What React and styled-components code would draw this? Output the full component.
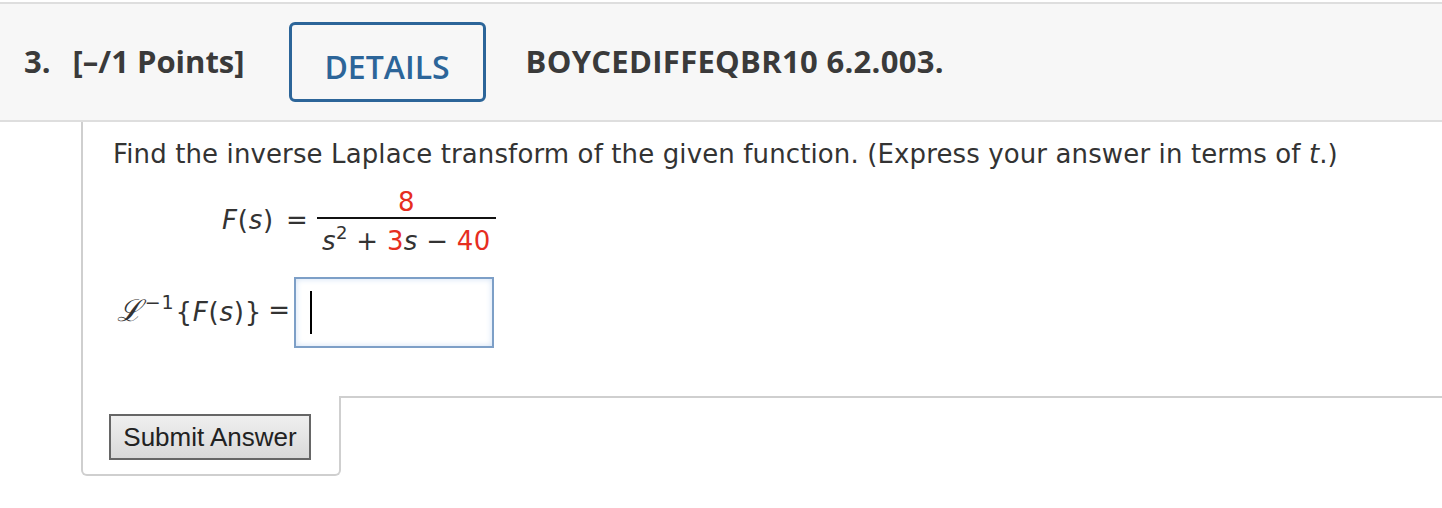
import React from 'react'
import styled, { createGlobalStyle } from 'styled-components'

const Global = createGlobalStyle`
    body {
        margin: 0;
        background: #fff;
        font-family: "DejaVu Sans", Verdana, sans-serif;
        color: #333;
    }
`

const Header = styled.div`
    box-sizing: border-box;
    margin-top: 2px;
    height: 120px;
    display: flex;
    align-items: center;
    background: #f7f7f7;
    border-top: 2px solid #dedede;
    border-bottom: 2px solid #dedede;
    padding: 0 0 3px 24px;
    font-family: "Open Sans", sans-serif;
    font-weight: 700;
    color: #3a3a3a;
`
const Num = styled.span`
    font-size: 31px;
    margin-right: 22px;
`
const Points = styled.span`
    font-size: 31px;
    margin-right: 44px;
`
const DetailsBtn = styled.div`
    box-sizing: border-box;
    width: 197px;
    height: 80px;
    margin-top: 3px;
    border: 3px solid #2c6599;
    border-radius: 6px;
    display: flex;
    align-items: center;
    justify-content: center;
    font-size: 32px;
    font-weight: 600;
    color: #2c6599;
    padding-top: 8px;
    margin-right: 40px;
`
const Code = styled.span`
    font-size: 31px;
    letter-spacing: 0.3px;
`

const Card = styled.div`
    margin-left: 81px;
`
const Content = styled.div`
    box-sizing: border-box;
    height: 274px;
    border-left: 2px solid #cfcfcf;
    padding: 15px 0 0 30px;
    font-size: 26px;
`
const Prompt = styled.p`
    margin: 0;
    line-height: 34px;
    letter-spacing: 0.12px;
`
const Var = styled.i`
    font-style: oblique;
`
const Red = styled.span`
    color: #e62e1f;
`
const MathRow = styled.div`
    display: flex;
    align-items: center;
    padding-left: ${props => props.indent}px;
    margin-top: ${props => props.top}px;
`
const Lhs = styled.span`
    padding-bottom: 6px;
    white-space: nowrap;
    letter-spacing: 0.8px;
`
const Eq = styled.span`
    padding-bottom: 6px;
    margin: 0 ${props => props.right}px 0 ${props => props.left}px;
`
const Fraction = styled.div`
    display: inline-flex;
    flex-direction: column;
    align-items: center;
    width: 179px;
`
const Numer = styled.div`
    line-height: 26px;
    padding-bottom: 2px;
    border-bottom: 2px solid #111;
    width: 100%;
    text-align: center;
`
const Denom = styled.div`
    line-height: 30px;
    padding-top: 7px;
    white-space: nowrap;
    letter-spacing: 0.3px;
    sup {
        font-size: 18px;
        vertical-align: 11px;
        line-height: 0;
    }
`
const Script = styled.span`
    font-family: "DejaVu Serif", serif;
    font-style: italic;
    font-size: 30px;
    margin-right: 2px;
`
const Sup = styled.sup`
    font-size: 19px;
    vertical-align: 12px;
    line-height: 0;
    margin-right: 1px;
`
const AnswerBox = styled.div`
    box-sizing: border-box;
    width: 200px;
    height: 71px;
    border: 2px solid #7d9fc7;
    box-shadow: inset 0 0 6px #cfe0f5;
    background: #fff;
    position: relative;
    &:after {
        content: "";
        position: absolute;
        left: 14px;
        top: 12px;
        width: 2px;
        height: 43px;
        background: #000;
    }
`

const Footer = styled.div`
    display: flex;
`
const Tab = styled.div`
    box-sizing: border-box;
    width: 260px;
    height: 80px;
    border-left: 2px solid #cfcfcf;
    border-right: 2px solid #cfcfcf;
    border-bottom: 2px solid #cfcfcf;
    border-radius: 0 0 6px 6px;
    padding: 18px 0 0 26px;
`
const Filler = styled.div`
    flex: 1;
    border-top: 2px solid #cfcfcf;
    margin-left: -2px;
`
const Submit = styled.button`
    box-sizing: border-box;
    width: 202px;
    height: 46px;
    border: 2px solid #666;
    background: linear-gradient(#efefef, #d9d9d9);
    font-family: "Liberation Sans", Arial, sans-serif;
    font-size: 26px;
    color: #222;
    padding: 0;
`

export default function App() {
    return (
        <>
            <Global />
            <Header>
                <Num>3.</Num>
                <Points>[–/1 Points]</Points>
                <DetailsBtn>DETAILS</DetailsBtn>
                <Code>BOYCEDIFFEQBR10 6.2.003.</Code>
            </Header>
            <Card>
                <Content>
                    <Prompt>
                        Find the inverse Laplace transform of the given function. (Express your answer in terms of <Var>t</Var>.)
                    </Prompt>
                    <MathRow indent={109} top={18}>
                        <Lhs><Var>F</Var>(<Var>s</Var>)</Lhs>
                        <Eq left={12} right={9}>=</Eq>
                        <Fraction>
                            <Numer><Red>8</Red></Numer>
                            <Denom>
                                <Var>s</Var><sup>2</sup> + <Red>3</Red><Var>s</Var> − <Red>40</Red>
                            </Denom>
                        </Fraction>
                    </MathRow>
                    <MathRow indent={4} top={21}>
                        <Lhs><Script>ℒ</Script><Sup>−1</Sup>{'{'}<Var>F</Var>(<Var>s</Var>){'}'}</Lhs>
                        <Eq left={6} right={4}>=</Eq>
                        <AnswerBox />
                    </MathRow>
                </Content>
                <Footer>
                    <Tab>
                        <Submit>Submit Answer</Submit>
                    </Tab>
                    <Filler />
                </Footer>
            </Card>
        </>
    )
}
